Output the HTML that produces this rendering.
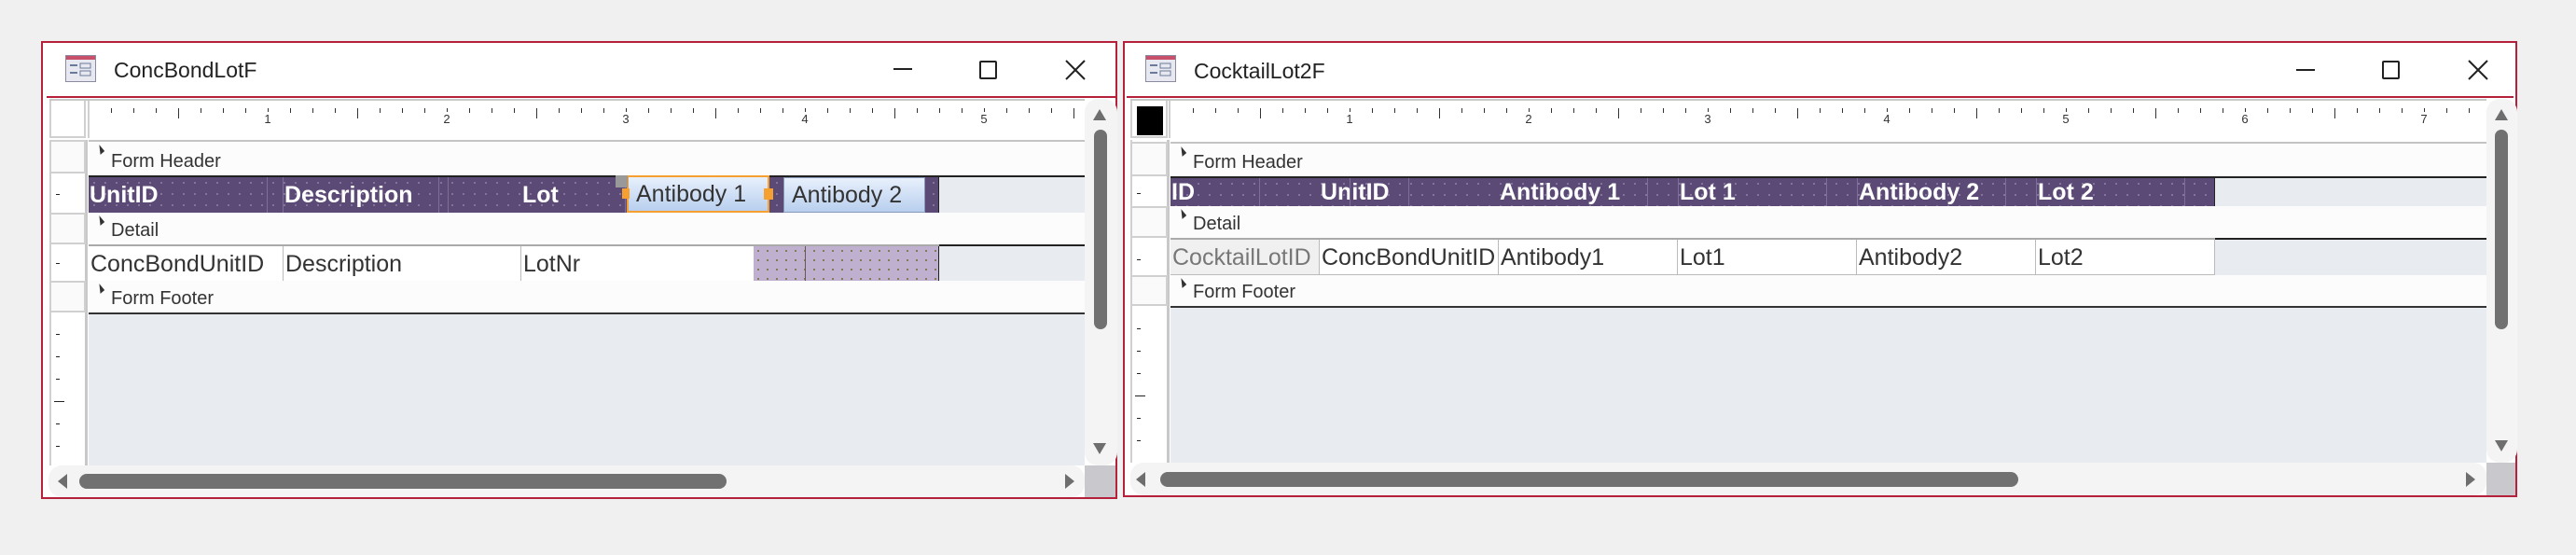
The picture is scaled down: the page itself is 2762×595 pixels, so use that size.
<!DOCTYPE html>
<html><head><meta charset="utf-8"><style>
*{margin:0;padding:0;box-sizing:border-box}
body{width:2762px;height:595px;background:#f0f0f0;position:relative;overflow:hidden;font-family:"Liberation Sans",sans-serif;color:#333}
.a{position:absolute}
.win{position:absolute;background:#fff;border:2px solid #b5213a}
.t{position:absolute;white-space:nowrap;line-height:1}
.ruler .s{position:absolute;top:50px;height:5px;background-image:repeating-linear-gradient(90deg,#333 0 1px,transparent 1px 24px)}
.ruler .l{position:absolute;top:50px;height:11px;background-image:repeating-linear-gradient(90deg,#333 0 1px,transparent 1px 192px)}
.num{position:absolute;top:56px;font-size:13px;background:#fff;width:10px;text-align:center;margin-left:-5px}
.band{position:absolute;background:#fcfcfc;border-top:2px solid #c4c4c4}
.band span{position:absolute;left:24px;bottom:3px;font-size:20px;color:#333}
.band i{position:absolute;left:9px;top:4px;width:0;height:0;border-left:6px solid transparent;border-bottom:9px solid #333;transform:rotate(-40deg)}
.hdr{position:absolute;background:#5c4a76;border-top:2px solid #222;background-image:radial-gradient(circle,#8c7ca4 0.8px,transparent 1.2px);background-size:12px 12px}
.lbl{position:absolute;top:0;bottom:0;color:#fff;font-weight:bold;font-size:25px;line-height:38px;padding-left:1px;border-right:1px solid #7e6e98;white-space:nowrap;overflow:hidden}
.div{position:absolute;top:0;bottom:0;width:1px;background:#7e6e98}
.cell{position:absolute;top:0;bottom:0;background:#fff;border-right:1px solid #bbb;font-size:25px;line-height:38px;padding-left:2px;white-space:nowrap;overflow:hidden;color:#333}
.vdash{position:absolute;height:1px;background:#222;width:4px}
.vs{position:absolute;background:#f4f4f4}
.gray{position:absolute;background:#e8ebf0}
</style></head><body>

<!-- WINDOW 1 -->
<div class="win" style="left:44px;top:44px;width:1154px;height:491px">
 <div class="a" style="left:0;top:0;width:1150px;height:487px">
  <svg class="a" style="left:24px;top:13px" width="34" height="30"><rect x="0.5" y="0.5" width="32" height="28" fill="#e8e8f0" stroke="#8a8aa0"/><rect x="1" y="1" width="31" height="4" fill="#c8506a"/><rect x="5" y="10" width="8" height="2" fill="#6a7a9a"/><rect x="16" y="9" width="11" height="5" fill="none" stroke="#6a7a9a"/><rect x="5" y="18" width="8" height="2" fill="#6a7a9a"/><rect x="16" y="17" width="11" height="5" fill="none" stroke="#6a7a9a"/></svg>
  <div class="t" style="left:76px;top:18px;font-size:23px;color:#222">ConcBondLotF</div>
  <div class="a" style="left:912px;top:27px;width:20px;height:2px;background:#222"></div>
  <div class="a" style="left:1004px;top:19px;width:19px;height:20px;border:2px solid #222;border-radius:2px"></div>
  <svg class="a" style="left:1096px;top:18px" width="22" height="22"><path d="M1 1L21 21M21 1L1 21" stroke="#222" stroke-width="2"/></svg>
  <div class="a" style="left:4px;top:57px;width:1146px;height:2px;background:#b5213a"></div>
  <div class="a ruler" style="left:7px;top:60px;width:1110px;height:42px;border-top:2px solid #c8c8c8">
   <div class="a" style="left:0;top:0;width:39px;height:40px;border:2px solid #d0d0d0;border-top:0"></div>
   <div class="a" style="left:41px;top:0;width:2px;height:40px;background:#d0d0d0"></div>
   <div class="s" style="left:66px;width:1040px;top:8px"></div>
   <div class="l" style="left:138px;width:1000px;top:8px"></div>
   <div class="num" style="left:234px;top:12px">1</div><div class="num" style="left:426px;top:12px">2</div><div class="num" style="left:618px;top:12px">3</div><div class="num" style="left:810px;top:12px">4</div><div class="num" style="left:1002px;top:12px">5</div>
  </div>
  <div class="a" style="left:7px;top:104px;width:41px;height:349px;background:#fff;border-left:2px solid #d0d0d0;border-right:3px solid #c8c8c8"></div>
  <div class="a" style="left:7px;top:104px;width:39px;height:36px;border:2px solid #d0d0d0;background:#fafafa"></div>
  <div class="a" style="left:7px;top:182px;width:39px;height:34px;border:2px solid #d0d0d0;background:#fafafa"></div>
  <div class="a" style="left:7px;top:255px;width:39px;height:34px;border:2px solid #d0d0d0;background:#fafafa"></div>
  <div class="vdash" style="left:14px;top:162px"></div><div class="vdash" style="left:14px;top:236px"></div>
  <div class="vdash" style="left:14px;top:312px"></div><div class="vdash" style="left:14px;top:336px"></div><div class="vdash" style="left:14px;top:360px"></div><div class="vdash" style="left:12px;top:384px;width:11px"></div><div class="vdash" style="left:14px;top:408px"></div><div class="vdash" style="left:14px;top:432px"></div>
  <div class="band" style="left:49px;top:104px;width:1068px;height:38px"><i></i><span>Form Header</span></div>
  <div class="gray" style="left:49px;top:142px;width:1068px;height:40px;border-top:2px solid #222"></div>
  <div class="hdr" style="left:49px;top:142px;width:912px;height:40px">
   <div class="lbl" style="left:0;width:192px">UnitID</div>
   <div class="div" style="left:208px"></div>
   <div class="lbl" style="left:209px;width:167px">Description</div>
   <div class="div" style="left:385px"></div>
   <div class="lbl" style="left:464px;width:112px">Lot</div>
   <div class="a" style="left:577px;top:-2px;width:153px;height:40px;background:linear-gradient(#e8f0fc,#b8cfee);border:2px solid #f5a030;font-size:25px;line-height:36px;padding-left:8px;color:#333">Antibody 1</div>
   <div class="a" style="left:565px;top:-2px;width:13px;height:13px;background:#999"></div>
   <div class="a" style="left:572px;top:12px;width:8px;height:11px;background:#f5a030"></div>
   <div class="a" style="left:724px;top:12px;width:10px;height:12px;background:#f5a030"></div>
   <div class="a" style="left:745px;top:0;width:152px;height:38px;background:linear-gradient(#e8f0fc,#b8cfee);border:1px solid #8898b8;font-size:25px;line-height:36px;padding-left:8px;color:#333">Antibody 2</div>
   <div class="a" style="left:911px;top:0;width:1px;height:38px;background:#222"></div>
  </div>
  <div class="band" style="left:49px;top:182px;width:1068px;height:34px;border-top:0"><i></i><span>Detail</span></div>
  <div class="gray" style="left:49px;top:216px;width:1068px;height:39px;border-top:2px solid #222"></div>
  <div class="a" style="left:49px;top:216px;width:912px;height:39px;border-top:2px solid #aaa">
   <div class="cell" style="left:0;width:209px">ConcBondUnitID</div>
   <div class="cell" style="left:209px;width:255px">Description</div>
   <div class="cell" style="left:464px;width:249px;border-right:0">LotNr</div>
   <div class="a" style="left:713px;top:0;width:199px;height:37px;background:#c0b0d0;border-right:1px solid #222;background-image:radial-gradient(circle,#7a7040 0.8px,transparent 1.2px);background-size:10px 10px"></div>
   <div class="a" style="left:768px;top:0;width:1px;height:37px;background:#6a5a50"></div>
  </div>
  <div class="band" style="left:49px;top:255px;width:1068px;height:36px;border-top:0;border-bottom:2px solid #333"><i></i><span>Form Footer</span></div>
  <div class="gray" style="left:49px;top:291px;width:1068px;height:162px"></div>
  <div class="vs" style="left:1117px;top:60px;width:35px;height:393px;border-radius:14px"></div>
  <svg class="a" style="left:1124px;top:69px" width="18" height="16"><path d="M9 2L16 14H2Z" fill="#6e6e6e"/></svg>
  <div class="a" style="left:1127px;top:93px;width:14px;height:214px;background:#717171;border-radius:7px"></div>
  <svg class="a" style="left:1124px;top:427px" width="18" height="16"><path d="M9 14L16 2H2Z" fill="#6e6e6e"/></svg>
  <div class="vs" style="left:6px;top:453px;width:1111px;height:34px;border-radius:14px"></div>
  <svg class="a" style="left:14px;top:461px" width="14" height="18"><path d="M2 9L12 1V17Z" fill="#6e6e6e"/></svg>
  <div class="a" style="left:39px;top:462px;width:694px;height:16px;background:#717171;border-radius:8px"></div>
  <svg class="a" style="left:1094px;top:461px" width="14" height="18"><path d="M12 9L2 1V17Z" fill="#6e6e6e"/></svg>
  <div class="a" style="left:1117px;top:453px;width:33px;height:34px;background:#c9c9cd"></div>
 </div>
</div>

<!-- WINDOW 2 -->
<div class="win" style="left:1204px;top:44px;width:1495px;height:489px">
 <div class="a" style="left:0;top:0;width:1491px;height:485px">
  <svg class="a" style="left:22px;top:13px" width="34" height="30"><rect x="0.5" y="0.5" width="32" height="28" fill="#e8e8f0" stroke="#8a8aa0"/><rect x="1" y="1" width="31" height="4" fill="#c8506a"/><rect x="5" y="10" width="8" height="2" fill="#6a7a9a"/><rect x="16" y="9" width="11" height="5" fill="none" stroke="#6a7a9a"/><rect x="5" y="18" width="8" height="2" fill="#6a7a9a"/><rect x="16" y="17" width="11" height="5" fill="none" stroke="#6a7a9a"/></svg>
  <div class="t" style="left:74px;top:19px;font-size:23px;color:#222">CocktailLot2F</div>
  <div class="a" style="left:1256px;top:28px;width:20px;height:2px;background:#222"></div>
  <div class="a" style="left:1348px;top:19px;width:19px;height:20px;border:2px solid #222;border-radius:2px"></div>
  <svg class="a" style="left:1440px;top:18px" width="22" height="22"><path d="M1 1L21 21M21 1L1 21" stroke="#222" stroke-width="2"/></svg>
  <div class="a" style="left:2px;top:57px;width:1487px;height:2px;background:#b5213a"></div>
  <div class="a ruler" style="left:6px;top:60px;width:1454px;height:42px;border-top:2px solid #c8c8c8">
   <div class="a" style="left:0;top:0;width:40px;height:40px;border:2px solid #d0d0d0;border-top:0"></div>
   <div class="a" style="left:7px;top:6px;width:28px;height:31px;background:#000"></div>
   <div class="a" style="left:41px;top:0;width:2px;height:40px;background:#d0d0d0"></div>
   <div class="s" style="left:67px;width:1385px;top:8px"></div>
   <div class="l" style="left:139px;width:1300px;top:8px"></div>
   <div class="num" style="left:235px;top:12px">1</div><div class="num" style="left:427px;top:12px">2</div><div class="num" style="left:619px;top:12px">3</div><div class="num" style="left:811px;top:12px">4</div><div class="num" style="left:1003px;top:12px">5</div><div class="num" style="left:1195px;top:12px">6</div><div class="num" style="left:1387px;top:12px">7</div>
  </div>
  <div class="a" style="left:6px;top:104px;width:42px;height:346px;background:#fff;border-left:2px solid #d0d0d0;border-right:3px solid #c8c8c8"></div>
  <div class="a" style="left:6px;top:106px;width:40px;height:37px;border:2px solid #d0d0d0;background:#fafafa"></div>
  <div class="a" style="left:6px;top:175px;width:40px;height:34px;border:2px solid #d0d0d0;background:#fafafa"></div>
  <div class="a" style="left:6px;top:249px;width:40px;height:33px;border:2px solid #d0d0d0;background:#fafafa"></div>
  <div class="vdash" style="left:13px;top:161px"></div><div class="vdash" style="left:13px;top:232px"></div>
  <div class="vdash" style="left:13px;top:306px"></div><div class="vdash" style="left:13px;top:330px"></div><div class="vdash" style="left:13px;top:354px"></div><div class="vdash" style="left:11px;top:378px;width:11px"></div><div class="vdash" style="left:13px;top:402px"></div><div class="vdash" style="left:13px;top:426px"></div>
  <div class="band" style="left:49px;top:106px;width:1411px;height:37px"><i></i><span>Form Header</span></div>
  <div class="gray" style="left:49px;top:143px;width:1411px;height:32px;border-top:2px solid #222"></div>
  <div class="hdr" style="left:49px;top:143px;width:1120px;height:32px;line-height:30px">
   <div class="lbl" style="left:0;width:96px;line-height:30px">ID</div>
   <div class="lbl" style="left:160px;width:96px;line-height:30px">UnitID</div>
   <div class="div" style="left:192px"></div>
   <div class="lbl" style="left:352px;width:160px;line-height:30px">Antibody 1</div>
   <div class="div" style="left:544px"></div>
   <div class="lbl" style="left:544px;width:160px;line-height:30px;border-left:1px solid #7e6e98">Lot 1</div>
   <div class="div" style="left:736px"></div>
   <div class="lbl" style="left:736px;width:160px;line-height:30px;border-left:1px solid #7e6e98">Antibody 2</div>
   <div class="div" style="left:928px"></div>
   <div class="lbl" style="left:928px;width:160px;line-height:30px;border-left:1px solid #7e6e98">Lot 2</div>
   <div class="a" style="left:1119px;top:0;width:1px;height:30px;background:#222"></div>
  </div>
  <div class="band" style="left:49px;top:175px;width:1411px;height:34px;border-top:0"><i></i><span>Detail</span></div>
  <div class="gray" style="left:49px;top:209px;width:1411px;height:40px;border-top:2px solid #222"></div>
  <div class="a" style="left:49px;top:209px;width:1120px;height:40px;border-top:2px solid #aaa;border-bottom:1px solid #bbb;border-right:1px solid #bbb">
   <div class="cell" style="left:0;width:160px;background:#f0f0f0;color:#777">CocktailLotID</div>
   <div class="cell" style="left:160px;width:192px">ConcBondUnitID</div>
   <div class="cell" style="left:352px;width:192px">Antibody1</div>
   <div class="cell" style="left:544px;width:192px">Lot1</div>
   <div class="cell" style="left:736px;width:192px">Antibody2</div>
   <div class="cell" style="left:928px;width:191px;border-right:0">Lot2</div>
  </div>
  <div class="band" style="left:49px;top:249px;width:1411px;height:35px;border-top:0;border-bottom:2px solid #333"><i></i><span>Form Footer</span></div>
  <div class="gray" style="left:49px;top:284px;width:1411px;height:166px"></div>
  <div class="vs" style="left:1460px;top:60px;width:33px;height:390px;border-radius:14px"></div>
  <svg class="a" style="left:1467px;top:69px" width="18" height="16"><path d="M9 2L16 14H2Z" fill="#6e6e6e"/></svg>
  <div class="a" style="left:1469px;top:93px;width:14px;height:214px;background:#717171;border-radius:7px"></div>
  <svg class="a" style="left:1467px;top:424px" width="18" height="16"><path d="M9 14L16 2H2Z" fill="#6e6e6e"/></svg>
  <div class="vs" style="left:6px;top:450px;width:1454px;height:35px;border-radius:14px"></div>
  <svg class="a" style="left:10px;top:459px" width="14" height="18"><path d="M2 9L12 1V17Z" fill="#6e6e6e"/></svg>
  <div class="a" style="left:38px;top:460px;width:920px;height:16px;background:#717171;border-radius:8px"></div>
  <svg class="a" style="left:1436px;top:459px" width="14" height="18"><path d="M12 9L2 1V17Z" fill="#6e6e6e"/></svg>
  <div class="a" style="left:1460px;top:450px;width:31px;height:35px;background:#c9c9cd"></div>
 </div>
</div>
</body></html>
